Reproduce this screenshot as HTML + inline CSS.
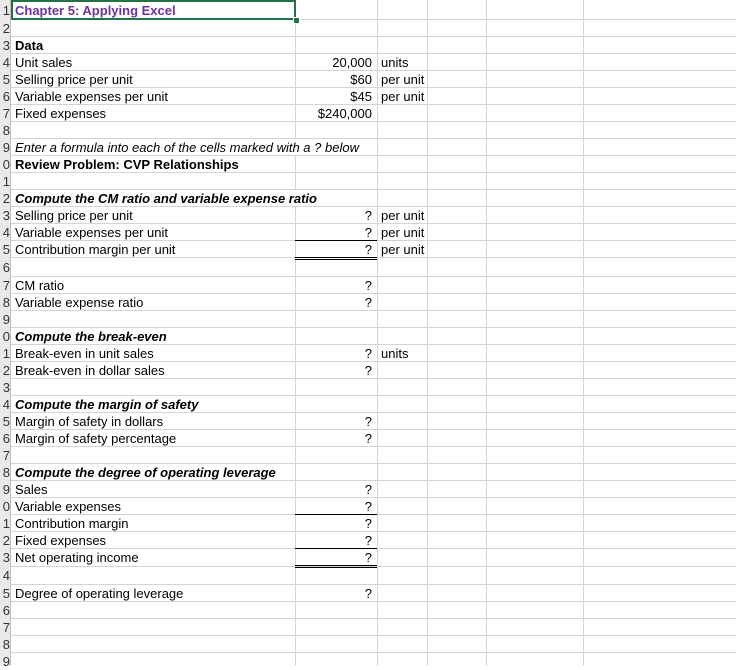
<!DOCTYPE html>
<html><head><meta charset="utf-8"><style>
body{margin:0;width:736px;height:666px;overflow:hidden;background:#fff;font-family:"Liberation Sans",Arial,sans-serif;font-size:13px;color:#000;position:relative}
.h{position:absolute;left:0;width:736px;height:1px;background:#d4d4d4}
.v{position:absolute;top:0;height:666px;width:1px;background:#d4d4d4}
.rh{position:absolute;left:0;top:0;width:11px;height:666px;background:#e9e9e9;border-right:1px solid #bdbdbd;box-sizing:border-box}
.n{position:absolute;left:0;width:10px;height:17px;line-height:17px;overflow:hidden;text-align:right;color:#333;font-size:13px;direction:rtl}
.t{position:absolute;left:15px;height:17px;line-height:17px;white-space:nowrap}
.r{position:absolute;left:296px;width:76px;text-align:right;height:17px;line-height:17px}
.u{position:absolute;left:381px;height:17px;line-height:17px;white-space:nowrap}
.b{font-weight:bold}.i{font-style:italic}
.w{position:absolute;background:#fff;height:16px}
.ln{position:absolute;left:295px;width:82px;height:1px;background:#000}
</style></head><body>
<div class="h" style="top:19px"></div><div class="h" style="top:36px"></div><div class="h" style="top:53px"></div><div class="h" style="top:70px"></div><div class="h" style="top:87px"></div><div class="h" style="top:104px"></div><div class="h" style="top:121px"></div><div class="h" style="top:138px"></div><div class="h" style="top:155px"></div><div class="h" style="top:172px"></div><div class="h" style="top:189px"></div><div class="h" style="top:206px"></div><div class="h" style="top:223px"></div><div class="h" style="top:240px"></div><div class="h" style="top:257px"></div><div class="h" style="top:276px"></div><div class="h" style="top:293px"></div><div class="h" style="top:310px"></div><div class="h" style="top:327px"></div><div class="h" style="top:344px"></div><div class="h" style="top:361px"></div><div class="h" style="top:378px"></div><div class="h" style="top:395px"></div><div class="h" style="top:412px"></div><div class="h" style="top:429px"></div><div class="h" style="top:446px"></div><div class="h" style="top:463px"></div><div class="h" style="top:480px"></div><div class="h" style="top:497px"></div><div class="h" style="top:514px"></div><div class="h" style="top:531px"></div><div class="h" style="top:548px"></div><div class="h" style="top:566px"></div><div class="h" style="top:584px"></div><div class="h" style="top:601px"></div><div class="h" style="top:618px"></div><div class="h" style="top:635px"></div><div class="h" style="top:652px"></div>
<div class="v" style="left:295px"></div>
<div class="v" style="left:377px"></div>
<div class="v" style="left:427px"></div>
<div class="v" style="left:486px"></div>
<div class="v" style="left:583px"></div>
<div class="w" style="left:290px;width:80px;top:139px"></div>
<div class="w" style="left:290px;width:32px;top:190px"></div>
<div class="rh"></div>
<div class="n" style="top:2px">1</div>
<div class="n" style="top:20px">2</div><div class="n" style="top:37px">3</div><div class="n" style="top:54px">4</div><div class="n" style="top:71px">5</div><div class="n" style="top:88px">6</div><div class="n" style="top:105px">7</div><div class="n" style="top:122px">8</div><div class="n" style="top:139px">9</div><div class="n" style="top:156px">0</div><div class="n" style="top:173px">1</div><div class="n" style="top:190px">2</div><div class="n" style="top:207px">3</div><div class="n" style="top:224px">4</div><div class="n" style="top:241px">5</div><div class="n" style="top:259px">6</div><div class="n" style="top:277px">7</div><div class="n" style="top:294px">8</div><div class="n" style="top:311px">9</div><div class="n" style="top:328px">0</div><div class="n" style="top:345px">1</div><div class="n" style="top:362px">2</div><div class="n" style="top:379px">3</div><div class="n" style="top:396px">4</div><div class="n" style="top:413px">5</div><div class="n" style="top:430px">6</div><div class="n" style="top:447px">7</div><div class="n" style="top:464px">8</div><div class="n" style="top:481px">9</div><div class="n" style="top:498px">0</div><div class="n" style="top:515px">1</div><div class="n" style="top:532px">2</div><div class="n" style="top:549px">3</div><div class="n" style="top:567px">4</div><div class="n" style="top:585px">5</div><div class="n" style="top:602px">6</div><div class="n" style="top:619px">7</div><div class="n" style="top:636px">8</div><div class="n" style="top:653px">9</div>

<div style="position:absolute;left:11px;top:0;width:285px;height:20px;border:2px solid #217346;box-sizing:border-box"></div>
<div style="position:absolute;left:293px;top:17px;width:5px;height:5px;background:#217346;border:1px solid #fff"></div>
<div class="t b" style="top:2px;font-size:13px;color:#7030a0">Chapter 5: Applying Excel</div>

<div class="t b" style="top:37px">Data</div>
<div class="t" style="top:54px">Unit sales</div><div class="r" style="top:54px">20,000</div><div class="u" style="top:54px">units</div>
<div class="t" style="top:71px">Selling price per unit</div><div class="r" style="top:71px">$60</div><div class="u" style="top:71px">per unit</div>
<div class="t" style="top:88px">Variable expenses per unit</div><div class="r" style="top:88px">$45</div><div class="u" style="top:88px">per unit</div>
<div class="t" style="top:105px">Fixed expenses</div><div class="r" style="top:105px">$240,000</div>
<div class="t i" style="top:139px">Enter a formula into each of the cells marked with a ? below</div>
<div class="t b" style="top:156px">Review Problem: CVP Relationships</div>
<div class="t b i" style="top:190px">Compute the CM ratio and variable expense ratio</div>
<div class="t" style="top:207px">Selling price per unit</div><div class="r" style="top:207px">?</div><div class="u" style="top:207px">per unit</div>
<div class="t" style="top:224px">Variable expenses per unit</div><div class="r" style="top:224px">?</div><div class="u" style="top:224px">per unit</div>
<div class="ln" style="top:240px"></div>
<div class="t" style="top:241px">Contribution margin per unit</div><div class="r" style="top:241px">?</div><div class="u" style="top:241px">per unit</div>
<div class="ln" style="top:257px"></div><div class="ln" style="top:259px"></div>
<div class="t" style="top:277px">CM ratio</div><div class="r" style="top:277px">?</div>
<div class="t" style="top:294px">Variable expense ratio</div><div class="r" style="top:294px">?</div>
<div class="t b i" style="top:328px">Compute the break-even</div>
<div class="t" style="top:345px">Break-even in unit sales</div><div class="r" style="top:345px">?</div><div class="u" style="top:345px">units</div>
<div class="t" style="top:362px">Break-even in dollar sales</div><div class="r" style="top:362px">?</div>
<div class="t b i" style="top:396px">Compute the margin of safety</div>
<div class="t" style="top:413px">Margin of safety in dollars</div><div class="r" style="top:413px">?</div>
<div class="t" style="top:430px">Margin of safety percentage</div><div class="r" style="top:430px">?</div>
<div class="t b i" style="top:464px">Compute the degree of operating leverage</div>
<div class="t" style="top:481px">Sales</div><div class="r" style="top:481px">?</div>
<div class="t" style="top:498px">Variable expenses</div><div class="r" style="top:498px">?</div>
<div class="ln" style="top:514px"></div>
<div class="t" style="top:515px">Contribution margin</div><div class="r" style="top:515px">?</div>
<div class="t" style="top:532px">Fixed expenses</div><div class="r" style="top:532px">?</div>
<div class="ln" style="top:548px"></div>
<div class="t" style="top:549px">Net operating income</div><div class="r" style="top:549px">?</div>
<div class="ln" style="top:565px"></div><div class="ln" style="top:567px"></div>
<div class="t" style="top:585px">Degree of operating leverage</div><div class="r" style="top:585px">?</div>
</body></html>
